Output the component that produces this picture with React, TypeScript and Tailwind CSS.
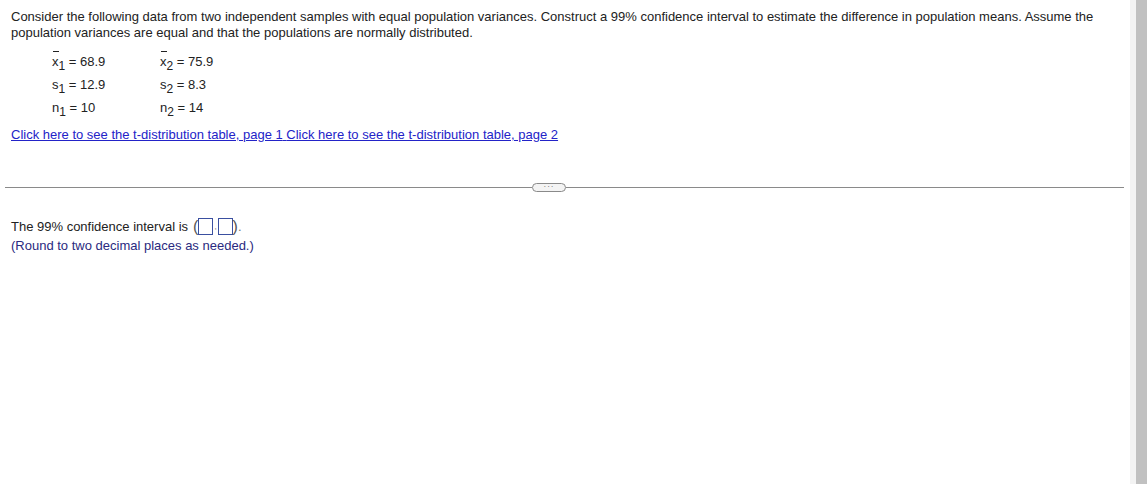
const Sub = ({ base, sub, bar }: { base: string; sub: string; bar?: boolean }) => (
  <span className="whitespace-nowrap">
    <span className={bar ? 'relative' : ''}>
      {bar && <span className="absolute left-[1px] top-[-3px] h-[1px] w-[6px] bg-[#222]" />}
      {base}
    </span>
    <sub className="relative top-[1px] text-[12px] align-[-3px]">{sub}</sub>
  </span>
)

const App = () => {
  const rows = [
    [<Sub key="a" base="x" sub="1" bar />, '68.9', <Sub key="b" base="x" sub="2" bar />, '75.9'],
    [<Sub key="c" base="s" sub="1" />, '12.9', <Sub key="d" base="s" sub="2" />, '8.3'],
    [<Sub key="e" base="n" sub="1" />, '10', <Sub key="f" base="n" sub="2" />, '14'],
  ]
  return (
    <div className="flex h-[484px] w-full overflow-hidden bg-white font-['Liberation_Sans',Arial,sans-serif] text-[13px] text-[#222]">
      <div className="min-w-0 flex-1 pt-[9px]">
        <p className="pl-[11px] pr-[20px] leading-[16px]">
          Consider the following data from two independent samples with equal population variances. Construct a 99% confidence interval to estimate the difference in population means. Assume the population variances are equal and that the populations are normally distributed.
        </p>
        <div className="mt-[12px] flex flex-col gap-[6px] pl-[52px]">
          {rows.map((r, i) => (
            <div key={i} className="flex h-[17px] items-center">
              <div className="w-[108px]">
                {r[0]} = {r[1]}
              </div>
              <div>
                {r[2]} = {r[3]}
              </div>
            </div>
          ))}
        </div>
        <div className="mt-[9px] pl-[11px] text-[#2323c8] underline">
          <span>Click here to see the t-distribution table, page 1</span>{' '}
          <span>Click here to see the t-distribution table, page 2</span>
        </div>
        <div className="mt-[38px] flex items-center pl-[5px] pr-[6px]">
          <div className="h-[1px] flex-1 bg-[#8a8a8a]" />
          <div className="flex h-[9px] w-[34px] items-center justify-center rounded-full border border-[#8a8a8a] bg-[#f4f4f4] text-[8px] leading-none tracking-[1px] text-[#555]">
            ···
          </div>
          <div className="h-[1px] w-[558px] bg-[#8a8a8a]" />
        </div>
        <div className="mt-[26px] pl-[11px]">
          <div className="flex items-center leading-[18px]">
            <span>The 99% confidence interval is</span>
            <span className="ml-[5px] text-[16px] text-[#555]">(</span>
            <span className="h-[17px] w-[15px] border border-[#3a4fa0]" />
            <span className="mx-[1px] text-[8px] text-[#666]">,</span>
            <span className="h-[17px] w-[15px] border border-[#3a4fa0]" />
            <span className="text-[16px] text-[#555]">)</span>
            <span className="text-[#777]">.</span>
          </div>
          <div className="mt-[1px] leading-[18px] text-[#2a2a80]">(Round to two decimal places as needed.)</div>
        </div>
      </div>
      <div className="h-full w-[17px] shrink-0 border-l-[6px] border-solid border-[#f3f3f3] bg-[#c1c1c1]" />
    </div>
  )
}

export default App
